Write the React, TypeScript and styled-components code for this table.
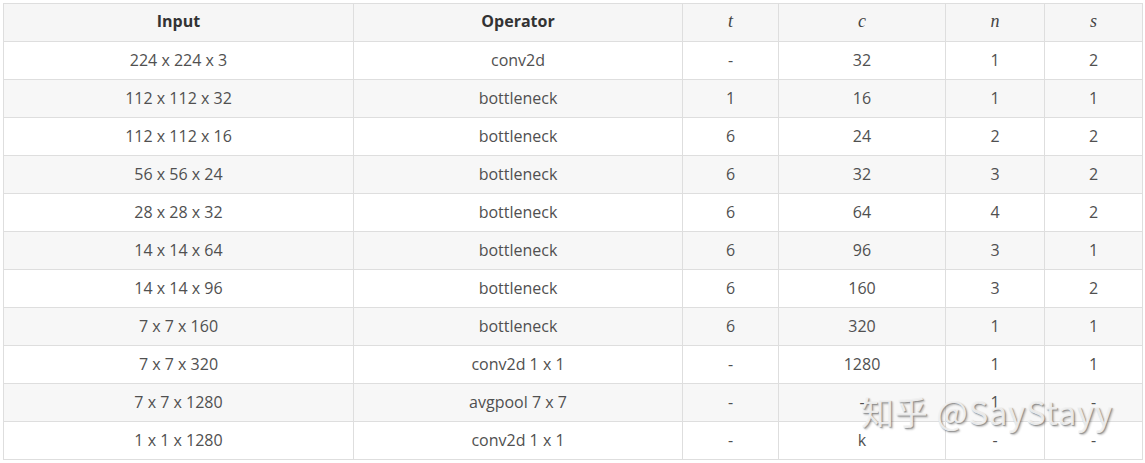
import React from "react";
import styled, { createGlobalStyle } from "styled-components";

const Global = createGlobalStyle`
  html, body { margin: 0; padding: 0; background: #fff; }
  body { font-family: "Open Sans", "Noto Sans CJK SC", sans-serif; }
`;

const Page = styled.div`
  position: relative;
  padding: 3px 0 0 3px;
  width: 1145px;
  height: 463px;
  box-sizing: border-box;
`;

const Table = styled.table`
  border-collapse: collapse;
  table-layout: fixed;
  width: 1140px;
  font-size: 16px;
  color: #505050;
`;

const Row = styled.tr<{ $striped?: boolean }>`
  height: 38px;
  background: ${(p) => (p.$striped ? "#f7f7f7" : "#fff")};
`;

const HeadCell = styled.th<{ $math?: boolean }>`
  border: 1px solid #dedede;
  padding: 0 0 3px;
  text-align: center;
  font-weight: ${(p) => (p.$math ? 400 : 700)};
  font-family: ${(p) => (p.$math ? '"Liberation Serif", "DejaVu Serif", serif' : 'inherit')};
  font-style: ${(p) => (p.$math ? "italic" : "normal")};
  font-size: ${(p) => (p.$math ? "18px" : "16px")};
  color: ${(p) => (p.$math ? "#444" : "#333")};
  background: #f6f6f6;
`;

const Cell = styled.td`
  border: 1px solid #dedede;
  padding: 0 0 2px;
  text-align: center;
`;

const Watermark = styled.div`
  position: absolute;
  left: 861px;
  top: 387px;
  font-family: "Noto Sans CJK SC", "Open Sans", sans-serif;
  font-size: 33px;
  letter-spacing: 0.7px;
  color: rgba(242, 242, 242, 0.92);
  text-shadow: 1px 1px 1px rgba(90, 90, 90, 0.55), 2px 2px 2px rgba(0, 0, 0, 0.2);
  white-space: nowrap;
  pointer-events: none;
`;

const widths = [350, 329, 96, 167, 99, 98];
const headers: { label: string; math?: boolean }[] = [
  { label: "Input" },
  { label: "Operator" },
  { label: "t", math: true },
  { label: "c", math: true },
  { label: "n", math: true },
  { label: "s", math: true },
];

const rows: string[][] = [
  ["224 x 224 x 3", "conv2d", "-", "32", "1", "2"],
  ["112 x 112 x 32", "bottleneck", "1", "16", "1", "1"],
  ["112 x 112 x 16", "bottleneck", "6", "24", "2", "2"],
  ["56 x 56 x 24", "bottleneck", "6", "32", "3", "2"],
  ["28 x 28 x 32", "bottleneck", "6", "64", "4", "2"],
  ["14 x 14 x 64", "bottleneck", "6", "96", "3", "1"],
  ["14 x 14 x 96", "bottleneck", "6", "160", "3", "2"],
  ["7 x 7 x 160", "bottleneck", "6", "320", "1", "1"],
  ["7 x 7 x 320", "conv2d 1 x 1", "-", "1280", "1", "1"],
  ["7 x 7 x 1280", "avgpool 7 x 7", "-", "-", "1", "-"],
  ["1 x 1 x 1280", "conv2d 1 x 1", "-", "k", "-", "-"],
];

export default function App() {
  return (
    <>
      <Global />
      <Page>
        <Table>
          <colgroup>
            {widths.map((w, i) => (
              <col key={i} style={{ width: w }} />
            ))}
          </colgroup>
          <thead>
            <Row>
              {headers.map((h) => (
                <HeadCell key={h.label} $math={h.math}>
                  {h.label}
                </HeadCell>
              ))}
            </Row>
          </thead>
          <tbody>
            {rows.map((r, i) => (
              <Row key={i} $striped={i % 2 === 1}>
                {r.map((c, j) => (
                  <Cell key={j}>{c}</Cell>
                ))}
              </Row>
            ))}
          </tbody>
        </Table>
        <Watermark>知乎 @SayStayy</Watermark>
      </Page>
    </>
  );
}
